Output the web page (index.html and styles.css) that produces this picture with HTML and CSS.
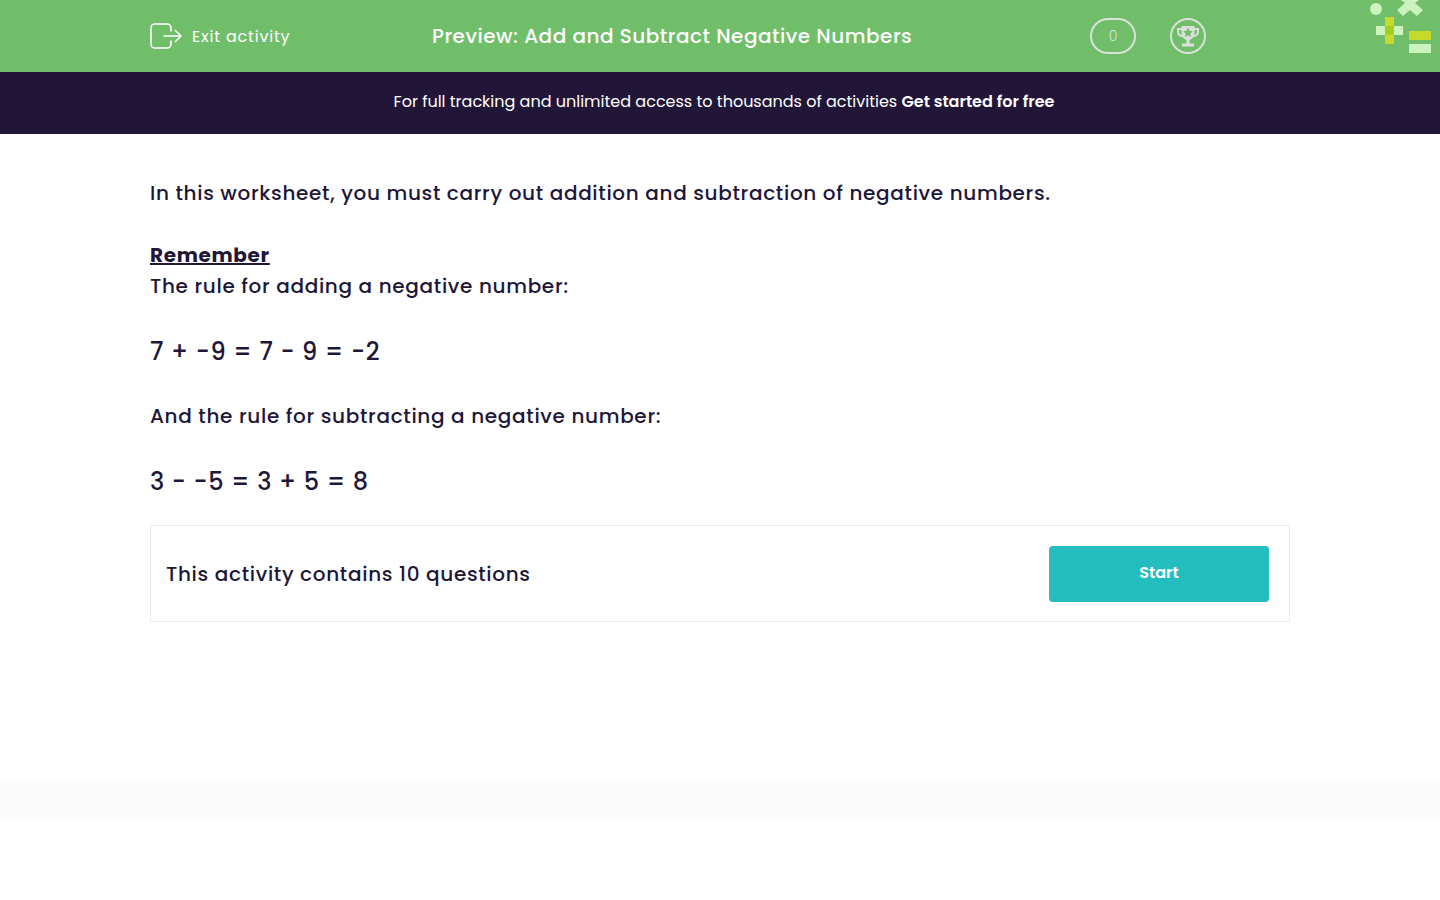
FILE: index.html
```html
<!DOCTYPE html>
<html lang="en">
<head>
<meta charset="UTF-8">
<meta name="viewport" content="width=device-width, initial-scale=1">
<title>Preview: Add and Subtract Negative Numbers</title>
<link rel="stylesheet" href="styles.css">
</head>
<body>

<header class="top-bar">
  <div class="container top-bar-row">
    <a class="exit-link" href="#">
      <svg class="exit-icon" width="32" height="26" viewBox="0 0 32 26" fill="none" stroke="currentColor" stroke-width="1.6" stroke-linecap="round" stroke-linejoin="round">
        <path d="M21 8V5a4 4 0 0 0-4-4H5a4 4 0 0 0-4 4v16a4 4 0 0 0 4 4h12a4 4 0 0 0 4-4v-3"/>
        <path d="M14 13h17M25.500 7.500L31 13l-5.500 5.500"/>
      </svg>
      Exit activity
    </a>
    <h1 class="activity-title">Preview: Add and Subtract Negative Numbers</h1>
    <div class="scores">
      <span class="points">0</span>
      <span class="trophy">
        <svg width="24" height="24" viewBox="0 0 24 24" fill="none" stroke="currentColor" stroke-width="2">
          <path d="M5.500 2h13v7c0 4-2.500 7-6.500 7s-6.500-3-6.500-7z" fill="currentColor" stroke="none"/>
          <path d="M6.500 5H2v2.500c0 3 2.500 4.800 6 4.800M17.500 5H22v2.500c0 3-2.500 4.800-6 4.800"/>
          <path d="M12 15v5M6 21h12" stroke-width="3"/>
          <path d="M12 3.600l1.500 3.200 3.400.4-2.500 2.300.7 3.400-3.100-1.700-3.100 1.700.7-3.400-2.500-2.300 3.400-.4z" fill="#70be6a" stroke="none"/>
        </svg>
      </span>
    </div>
  </div>
  <svg class="maths-logo" width="72" height="72" viewBox="0 0 72 72">
    <g fill="#ccf2be">
      <circle cx="8" cy="9" r="6"/>
      <path d="M29 10l8-7-4-3h18l-4 3 8 7-6 6-7-6-7 6z"/>
      <path d="M8 26h27v9H8zM41 44h22v9H41z"/>
    </g>
    <path d="M17 17h9v27h-9zM41 31h22v9H41z" fill="#c8d92e"/>
    <path d="M17 26h9v9h-9z" fill="#a5cf1f"/>
  </svg>
</header>

<div class="promo">
  For full tracking and unlimited access to thousands of activities <a href="#">Get started for free</a>
</div>

<main class="container content">
  <p>In this worksheet, you must carry out addition and subtraction of negative numbers.</p>
  <h2>Remember</h2>
  <p>The rule for adding a negative number:</p>
  <p class="sum">7 + -9 = 7 - 9 = -2</p>
  <p>And the rule for subtracting a negative number:</p>
  <p class="sum">3 - -5 = 3 + 5 = 8</p>

  <div class="start-box">
    <span>This activity contains 10 questions</span>
    <button class="start-btn" type="button">Start</button>
  </div>
</main>

<footer class="footer"></footer>

</body>
</html>
```
FILE: styles.css
```css
* {
  box-sizing: border-box;
}
body {
  margin: 0;
  font-family: Poppins, Inter, sans-serif;
  font-size: 20px;
  font-weight: 500;
  line-height: 31px;
  color: #211637;
  background: #fff;
  -webkit-font-smoothing: antialiased;
}
a {
  color: inherit;
  text-decoration: none;
}
h1, h2, p {
  margin: 0;
  font-size: inherit;
}
.container {
  width: 100%;
  max-width: 1140px;
  margin: 0 auto;
}

/* header */
.top-bar {
  position: relative;
  background: #70be6a;
  color: #fff;
}
.top-bar-row {
  display: flex;
  align-items: center;
  min-height: 72px;
  padding-right: 84px;
}
.exit-link {
  display: flex;
  align-items: center;
  flex: 0 0 282px;
  gap: 10px;
  font-size: 16px;
  font-weight: 400;
  letter-spacing: 0.05em;
}
.activity-title {
  font-weight: 500;
  letter-spacing: 0.025em;
}
.scores {
  display: flex;
  gap: 34px;
  margin-left: auto;
  color: #d9e2d8;
}
.points,
.trophy {
  display: flex;
  align-items: center;
  justify-content: center;
  height: 36px;
  border: 2px solid currentColor;
  border-radius: 18px;
}
.points {
  width: 46px;
  font-size: 14px;
  font-weight: 300;
}
.trophy {
  width: 36px;
}
.maths-logo {
  position: absolute;
  top: 0;
  right: 0;
}

/* sign up strip */
.promo {
  padding: 14px 0 17px 8px;
  background: #211637;
  color: #fff;
  font-size: 16px;
  font-weight: 400;
  text-align: center;
}
.promo a {
  font-weight: 600;
}

/* worksheet */
.content {
  padding-top: 44px;
  letter-spacing: 0.5pt;
}
.content h2 {
  margin-top: 31px;
  font-weight: 700;
  text-decoration: underline;
}
.content .sum {
  margin: 31px 0;
  font-size: 24px;
  line-height: 37px;
}
.content .sum:nth-last-child(2) {
  margin-bottom: 25px;
}
.start-box {
  display: flex;
  align-items: center;
  justify-content: space-between;
  padding: 20px 20px 19px 15px;
  border: 1px solid #ececec;
}
.start-btn {
  width: 220px;
  height: 56px;
  padding: 0 0 4px;
  border: none;
  border-radius: 4px;
  background: #24bdbf;
  color: #fff;
  font-family: inherit;
  font-size: 16px;
  font-weight: 600;
  cursor: pointer;
}

.footer {
  height: 38px;
  margin-top: 159px;
  background: #fbfbfb;
}
```
